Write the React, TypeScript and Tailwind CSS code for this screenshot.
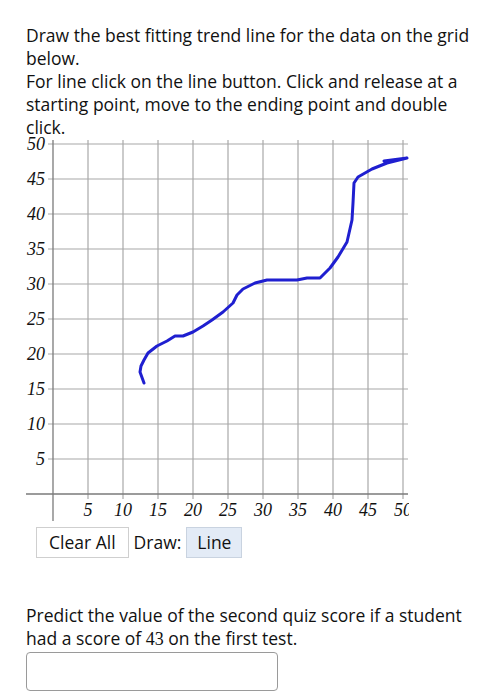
import React from 'react';

const TICKS = [0, 1, 2, 3, 4, 5, 6, 7, 8, 9, 10];
const X0 = 53;
const Y0 = 494;
const STEP = 35;

const CURVE =
  'M144,383 L140,372 L141,366 L144,360 L148,353 L157,346 L167,341 L175,336 L183,336 L193,332 L203,326 L212,320 L223,312 L233,303 L237,295 L243,289 L255,283 L267,280 L297,280 L307,278 L320,278 L330,268 L338,257 L347,242 L352,220 L353,203 L354,183 L358,177 L372,169 L387,163 L407,158 L384,161';

function Graph() {
  return (
    <svg width={498} height={400} viewBox="0 130 498 400" className="-mt-[9px] block">
      {TICKS.slice(1).map((i) => (
        <line key={'v' + i} x1={X0 + i * STEP} y1={140} x2={X0 + i * STEP} y2={499} stroke="#a8a8a8" strokeWidth={1.2} />
      ))}
      {TICKS.slice(1).map((i) => (
        <line key={'h' + i} x1={48} y1={Y0 - i * STEP} x2={408} y2={Y0 - i * STEP} stroke="#a8a8a8" strokeWidth={1.2} />
      ))}
      <line x1={26} y1={Y0} x2={408} y2={Y0} stroke="#7a7a7a" strokeWidth={1.3} />
      <line x1={X0} y1={140} x2={X0} y2={521} stroke="#7a7a7a" strokeWidth={1.3} />
      {TICKS.slice(1).map((i) => (
        <text key={'yl' + i} x={45} y={Y0 - i * STEP + 6} textAnchor="end" fontFamily="'Liberation Serif', serif" fontStyle="italic" fontSize={18} fill="#111">
          {i * 5}
        </text>
      ))}
      {TICKS.slice(1).map((i) => (
        <text key={'xl' + i} x={X0 + i * STEP} y={516} textAnchor="middle" fontFamily="'Liberation Serif', serif" fontStyle="italic" fontSize={18} fill="#111">
          {i * 5}
        </text>
      ))}
      <rect x={409} y={500} width={20} height={22} fill="#fff" />
      <path d={CURVE} fill="none" stroke="#1f1fd0" strokeWidth={3} strokeLinejoin="round" strokeLinecap="round" />
    </svg>
  );
}

export default function App() {
  return (
    <div className="h-[700px] w-[498px] bg-white text-[#111] font-['Open_Sans','Noto_Sans',sans-serif] [font-variant-ligatures:none]">
      <div className="whitespace-nowrap px-[26px] pt-[24px] text-[17.5px] leading-[23px]">
        <p>
          Draw the best fitting trend line for the data on the grid
          <br />
          below.
        </p>
        <p>
          For line click on the line button. Click and release at a
          <br />
          starting point, move to the ending point and double
          <br />
          click.
        </p>
      </div>
      <Graph />
      <div className="-mt-[3px] flex items-center pl-[36px] text-[17.5px]">
        <button className="h-[31px] border border-[#cfcfcf] bg-white px-[12px]">Clear All</button>
        <span className="ml-[5px] mr-[5px]">Draw:</span>
        <button className="h-[31px] border border-[#c9d3e0] bg-[#e3ebf6] px-[10px]">Line</button>
      </div>
      <p className="mt-[46px] whitespace-nowrap px-[26px] text-[17.5px] leading-[23px]">
        Predict the value of the second quiz score if a student
        <br />
        had a score of <span className="font-['Liberation_Serif',serif] text-[18px]">43</span> on the first test.
      </p>
      <input className="ml-[26px] mt-[1px] block h-[39px] w-[252px] rounded-[4px] border border-[#9a9a9a] outline-none" />
    </div>
  );
}
